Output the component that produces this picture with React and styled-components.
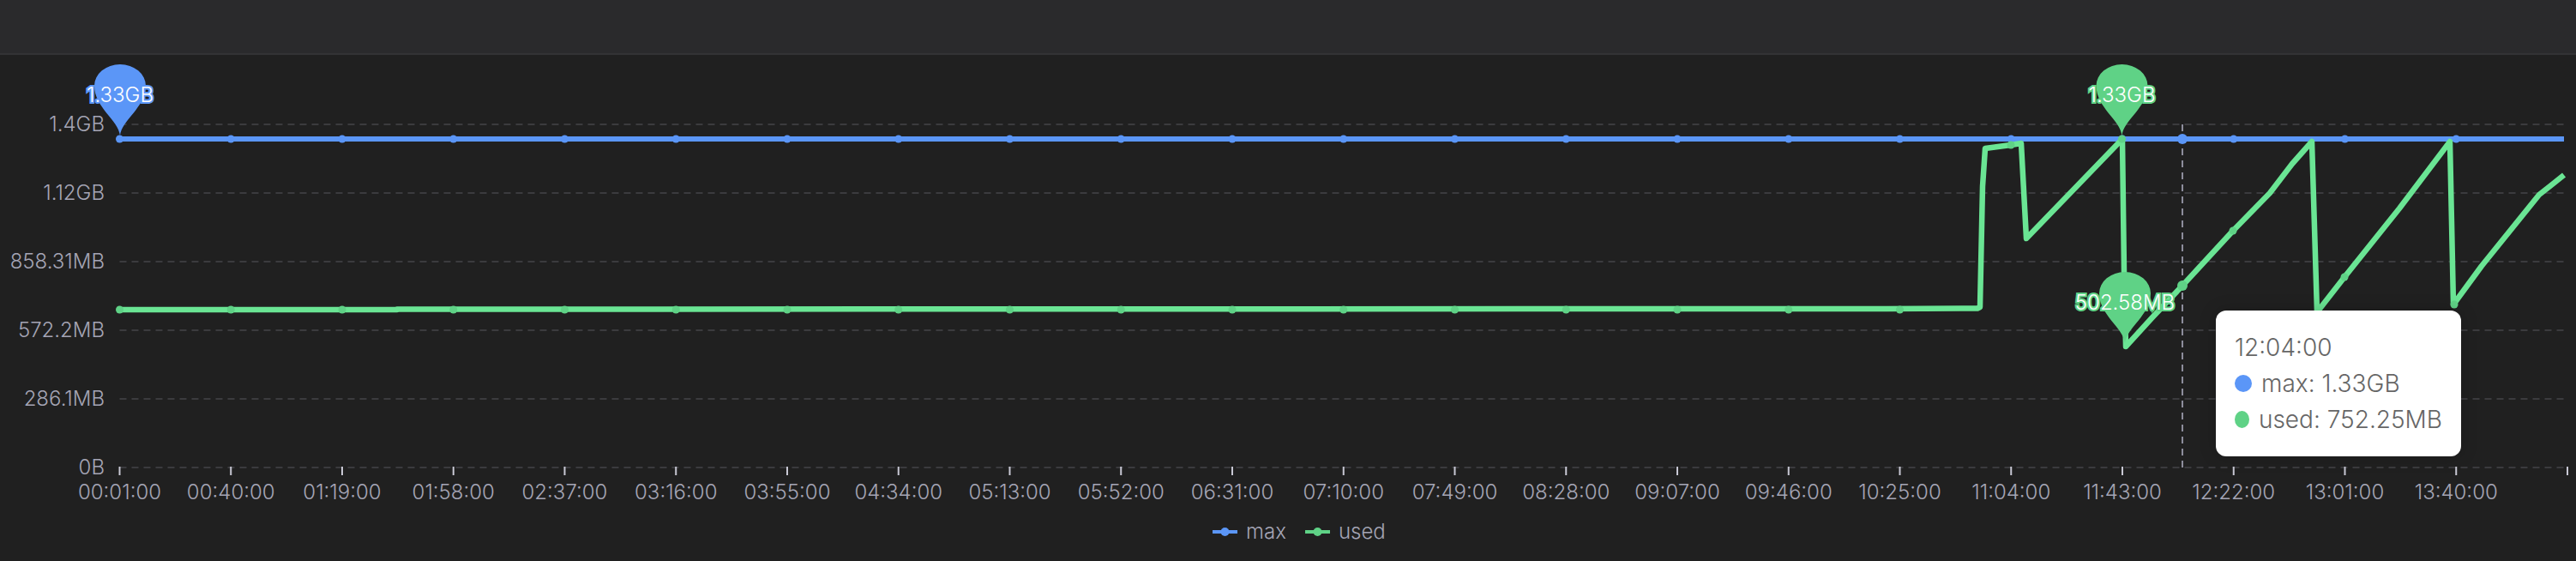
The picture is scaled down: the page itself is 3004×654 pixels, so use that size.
import React from 'react';
import styled, { createGlobalStyle } from 'styled-components';

const BLUE = '#5b96f7';
const GREEN = '#5fd286';
const LINE_GREEN = '#6ae594';

const GlobalStyle = createGlobalStyle`
  html, body {
    margin: 0;
    padding: 0;
    background: #202020;
  }
  #root {
    width: 3004px;
    height: 654px;
  }
`;

const Page = styled.div`
  width: 3004px;
  height: 654px;
  display: flex;
  flex-direction: column;
  background: #202020;
  overflow: hidden;
  font-family: Inter, "Noto Sans", sans-serif;
`;

const TopBar = styled.div`
  height: 62px;
  flex: none;
  background: #2a2a2c;
  border-bottom: 2px solid #333335;
`;

const ChartArea = styled.div`
  position: relative;
  flex: 1;
`;

const ChartSvg = styled.svg`
  display: block;
  font-family: Inter, "Noto Sans", sans-serif;
`;

const Tooltip = styled.div`
  position: absolute;
  left: 2584px;
  top: 298px;
  width: 286px;
  height: 170px;
  box-sizing: border-box;
  padding: 26px 22px;
  display: flex;
  flex-direction: column;
  gap: 8px;
  background: #fff;
  border-radius: 12px;
  box-shadow: 0 0 20px rgba(0, 0, 0, 0.2);
  color: #666;
  font-size: 28px;
  line-height: 34px;
  font-weight: 300;
`;

const TooltipRow = styled.div`
  display: flex;
  align-items: center;
  gap: 11px;
  white-space: nowrap;
`;

const Dot = styled.span`
  width: 20px;
  height: 20px;
  border-radius: 50%;
  background: ${(p) => p.$color};
`;

const Legend = styled.div`
  position: absolute;
  left: 1414px;
  top: 541px;
  display: flex;
  gap: 22px;
`;

const LegendItem = styled.div`
  display: flex;
  align-items: center;
  gap: 10px;
  color: #a5a5b5;
  font-size: 24px;
  line-height: 30px;
  font-weight: 300;
`;

const GRID_Y = [145, 225, 305, 385, 465, 545];
const Y_LABELS = ['1.4GB', '1.12GB', '858.31MB', '572.2MB', '286.1MB', '0B'];
const X_LABELS = [
  '00:01:00', '00:40:00', '01:19:00', '01:58:00', '02:37:00', '03:16:00',
  '03:55:00', '04:34:00', '05:13:00', '05:52:00', '06:31:00', '07:10:00',
  '07:49:00', '08:28:00', '09:07:00', '09:46:00', '10:25:00', '11:04:00',
  '11:43:00', '12:22:00', '13:01:00', '13:40:00',
];
const X0 = 139.5;
const STEP = 129.75;
const tickX = (i) => X0 + i * STEP;
const OFFSET = 64; // header height, chart coords are taken from the page

const USED = [
  [140, 361], [463, 361], [463, 360.5], [2200, 360], [2306, 359.5], [2309, 358],
  [2312, 217], [2315, 173], [2345, 169], [2357, 167], [2363, 278], [2420, 219],
  [2475, 162], [2477, 317], [2479, 404], [2510, 370], [2545, 333], [2604, 269],
  [2647, 225], [2673, 191], [2696, 165], [2702, 364], [2734, 323],
  [2798, 243], [2857, 165], [2861, 355], [2894, 310],
  [2961, 227], [2975, 216], [2990, 204],
];
const USED_DOTS = [
  ...X_LABELS.slice(0, 17).map((_, i) => [tickX(i), 361]),
  [2345, 169], [2474.5, 162], [2604, 269], [2734, 323], [2862, 355],
];

const pin = (x, tip) => {
  const c = tip - 58;
  return `M${x} ${tip}C${x - 2} ${tip - 18} ${x - 30} ${tip - 33} ${x - 30} ${c}A30 25 0 0 1 ${x + 30} ${c}C${x + 30} ${tip - 33} ${x + 2} ${tip - 18} ${x} ${tip}Z`;
};

const Marker = ({ x, tip, color, label }) => (
  <g>
    <path d={pin(x, tip - OFFSET)} fill={color} />
    <text
      x={x}
      y={tip - OFFSET - 39}
      textAnchor="middle"
      fontSize="24"
      fontWeight="300"
      fill="#fff"
      stroke={color}
      strokeWidth="4"
      paintOrder="stroke"
    >
      {label}
    </text>
  </g>
);

const LegendIcon = ({ color }) => (
  <svg width="29" height="12" viewBox="0 0 29 12">
    <rect y="4" width="29" height="4" fill={color} />
    <circle cx="14.5" cy="6" r="5" fill={color} />
  </svg>
);

export default function App() {
  const maxDots = X_LABELS.map((_, i) => tickX(i));
  return (
    <Page>
      <GlobalStyle />
      <TopBar />
      <ChartArea>
        <ChartSvg width="3004" height="590" viewBox="0 0 3004 590">
          {GRID_Y.map((y) => (
            <line key={y} x1={X0} x2="2990" y1={y - OFFSET} y2={y - OFFSET} stroke="#3b3b3e" strokeWidth="2" strokeDasharray="8 6" />
          ))}
          {Y_LABELS.map((t, i) => (
            <text key={t} x="122" y={GRID_Y[i] - OFFSET + 8} textAnchor="end" fontSize="24" fontWeight="300" fill="#a5a5b5">{t}</text>
          ))}
          {[...X_LABELS, ''].map((t, i) => (
            <g key={i}>
              <line x1={tickX(i)} x2={tickX(i)} y1={544 - OFFSET} y2={554 - OFFSET} stroke="#c8c8d4" strokeWidth="2" />
              <text x={tickX(i)} y={582 - OFFSET} textAnchor="middle" fontSize="24" fontWeight="300" fill="#a5a5b5">{t}</text>
            </g>
          ))}
          <line x1="2545" x2="2545" y1={145 - OFFSET} y2={545 - OFFSET} stroke="#8d8d9c" strokeWidth="2" strokeDasharray="8 6" />
          <path d={`M140 ${162 - OFFSET}H2990`} stroke={BLUE} strokeWidth="6" fill="none" />
          {maxDots.map((x) => (
            <circle key={x} cx={x} cy={162 - OFFSET} r="4.5" fill={BLUE} />
          ))}
          <circle cx="2545" cy={162 - OFFSET} r="6" fill={BLUE} />
          <polyline
            points={USED.map(([x, y]) => `${x},${y - OFFSET}`).join(' ')}
            fill="none"
            stroke={LINE_GREEN}
            strokeWidth="6.5"
            strokeLinejoin="round"
          />
          {USED_DOTS.map(([x, y]) => (
            <circle key={x} cx={x} cy={y - OFFSET} r="4.5" fill={GREEN} />
          ))}
          <circle cx="2545" cy={333 - OFFSET} r="6" fill={GREEN} />
          <Marker x={140} tip={158} color={BLUE} label="1.33GB" />
          <Marker x={2474.5} tip={158} color={GREEN} label="1.33GB" />
          <Marker x={2478} tip={400} color={GREEN} label="502.58MB" />
        </ChartSvg>
        <Tooltip>
          <div>12:04:00</div>
          <TooltipRow><Dot $color={BLUE} />max: 1.33GB</TooltipRow>
          <TooltipRow><Dot $color={GREEN} />used: 752.25MB</TooltipRow>
        </Tooltip>
        <Legend>
          <LegendItem><LegendIcon color={BLUE} />max</LegendItem>
          <LegendItem><LegendIcon color={GREEN} />used</LegendItem>
        </Legend>
      </ChartArea>
    </Page>
  );
}
